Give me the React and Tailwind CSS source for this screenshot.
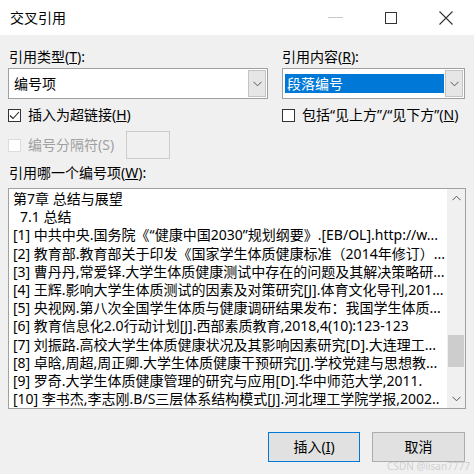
const items = [
  { text: "第7章 总结与展望" },
  { text: "7.1 总结", indent: true },
  { text: "[1] 中共中央.国务院《“健康中国2030”规划纲要》.[EB/OL].http://w..." },
  { text: "[2] 教育部.教育部关于印发《国家学生体质健康标准（2014年修订）..." },
  { text: "[3] 曹丹丹,常爱铎.大学生体质健康测试中存在的问题及其解决策略研..." },
  { text: "[4] 王辉.影响大学生体质测试的因素及对策研究[J].体育文化导刊,201..." },
  { text: "[5] 央视网.第八次全国学生体质与健康调研结果发布：我国学生体质..." },
  { text: "[6] 教育信息化2.0行动计划[J].西部素质教育,2018,4(10):123-123" },
  { text: "[7] 刘振路.高校大学生体质健康状况及其影响因素研究[D].大连理工..." },
  { text: "[8] 卓晗,周超,周正卿.大学生体质健康干预研究[J].学校党建与思想教..." },
  { text: "[9] 罗奇.大学生体质健康管理的研究与应用[D].华中师范大学,2011." },
  { text: "[10] 李书杰,李志刚.B/S三层体系结构模式[J].河北理工学院学报,2002.." },
];

function Chevron({ up = false }) {
  return (
    <svg width="9" height="6" viewBox="0 0 9 6" className={up ? "rotate-180" : ""}>
      <path d="M0.5 0.8 L4.5 4.8 L8.5 0.8" fill="none" stroke="#555" strokeWidth="1" />
    </svg>
  );
}

function Combo({ children, width }) {
  return (
    <div className={`flex h-[31px] border border-[#a0a0a0] bg-white ${width}`}>
      <div className="flex flex-1 items-center pl-[2px]">{children}</div>
      <div className="m-px flex w-[18px] items-center justify-center border border-[#c4c4c4] bg-[#e6e6e6]">
        <Chevron />
      </div>
    </div>
  );
}

function Check({ checked, disabled }) {
  return (
    <div
      className={`flex h-[13px] w-[13px] shrink-0 items-center justify-center border bg-white ${
        disabled ? "border-[#dcdcdc]" : "border-[#333333]"
      }`}
    >
      {checked && (
        <svg width="11" height="9" viewBox="0 0 11 9">
          <path d="M1 4.5 L4 7.5 L10 1" fill="none" stroke="#222" strokeWidth="1.1" />
        </svg>
      )}
    </div>
  );
}

export default function App() {
  return (
    <div className="relative h-[474px] w-[474px] overflow-hidden bg-[#f0f0f0] font-['Noto_Sans','Noto_Sans_CJK_SC',sans-serif] text-[14px] leading-[20px] text-black">
      {/* title bar */}
      <div className="flex h-[35px] items-center bg-white">
        <span className="pl-[10px]">交叉引用</span>
        <div className="ml-auto flex h-full pr-px">
          <div className="flex w-[55px] items-center justify-center">
            <div className="h-px w-[15px] bg-[#c8c8c8]" />
          </div>
          <div className="flex w-[55px] items-center justify-center">
            <div className="h-[12px] w-[12px] border border-[#333]" />
          </div>
          <div className="flex w-[55px] items-center justify-center">
            <svg width="14" height="14" viewBox="0 0 14 14">
              <path d="M0.5 0.5 L13.5 13.5 M13.5 0.5 L0.5 13.5" stroke="#333" strokeWidth="1.1" />
            </svg>
          </div>
        </div>
      </div>

      <div className="px-[8px] pt-[12px]">
        <div className="grid grid-cols-[260px_183px] gap-x-[14px]">
          <div>
            <div className="pl-px">
              引用类型(<span className="underline">T</span>):
            </div>
            <div className="mt-px">
              <Combo width="w-[260px]">
                <span className="pl-[3px]">编号项</span>
              </Combo>
            </div>
            <div className="mt-[6px] flex items-center gap-[7px]">
              <Check checked />
              <span>
                插入为超链接(<span className="underline">H</span>)
              </span>
            </div>
          </div>
          <div>
            <div>
              引用内容(<span className="underline">R</span>):
            </div>
            <div className="mt-px">
              <Combo width="w-[183px]">
                <span className="flex h-[19px] w-full items-center bg-[#0078d7] pl-[2px] text-white">段落编号</span>
              </Combo>
            </div>
            <div className="mt-[6px] flex items-center gap-[7px] whitespace-nowrap">
              <Check />
              <span>
                包括“见上方”/“见下方”(<span className="underline">N</span>)
              </span>
            </div>
          </div>
        </div>

        <div className="mt-[6px] flex items-center">
          <Check disabled />
          <span className="ml-[7px] text-[#a0a0a0]">编号分隔符(S)</span>
          <div className="ml-[12px] h-[28px] w-[44px] border border-[#cccccc] bg-[#f0f0f0]" />
        </div>

        <div className="mt-[4px] pl-px">
          引用哪一个编号项(<span className="underline">W</span>):
        </div>

        <div className="mt-[5px] flex h-[221px] border border-[#a0a0a0] bg-white">
          <div className="flex-1 overflow-hidden pl-[4px] pt-px leading-[18.2px]">
            {items.map((it, i) => (
              <div key={i} className={`overflow-hidden whitespace-nowrap ${it.indent ? "pl-[7px]" : ""}`}>
                {it.text}
              </div>
            ))}
          </div>
          <div className="flex w-[18px] flex-col bg-[#f0f0f0]">
            <div className="flex h-[18px] items-center justify-center">
              <Chevron up />
            </div>
            <div className="flex-1 px-px">
              <div className="mt-[128px] h-[32px] bg-[#cdcdcd]" />
            </div>
            <div className="flex h-[18px] items-center justify-center">
              <Chevron />
            </div>
          </div>
        </div>

        <div className="mt-[23px] flex justify-end gap-[12px] pr-px">
          <button className="flex h-[30px] w-[92px] items-center justify-center border border-[#0078d7] bg-[#e1e1e1]">
            插入(<span className="underline">I</span>)
          </button>
          <button className="flex h-[30px] w-[93px] items-center justify-center border border-[#adadad] bg-[#e1e1e1]">
            取消
          </button>
        </div>
      </div>

      <div className="absolute bottom-[2px] right-[4px] text-[10px] leading-[12px] text-[#d0d0d0]">CSDN @lisan7777</div>
    </div>
  );
}
